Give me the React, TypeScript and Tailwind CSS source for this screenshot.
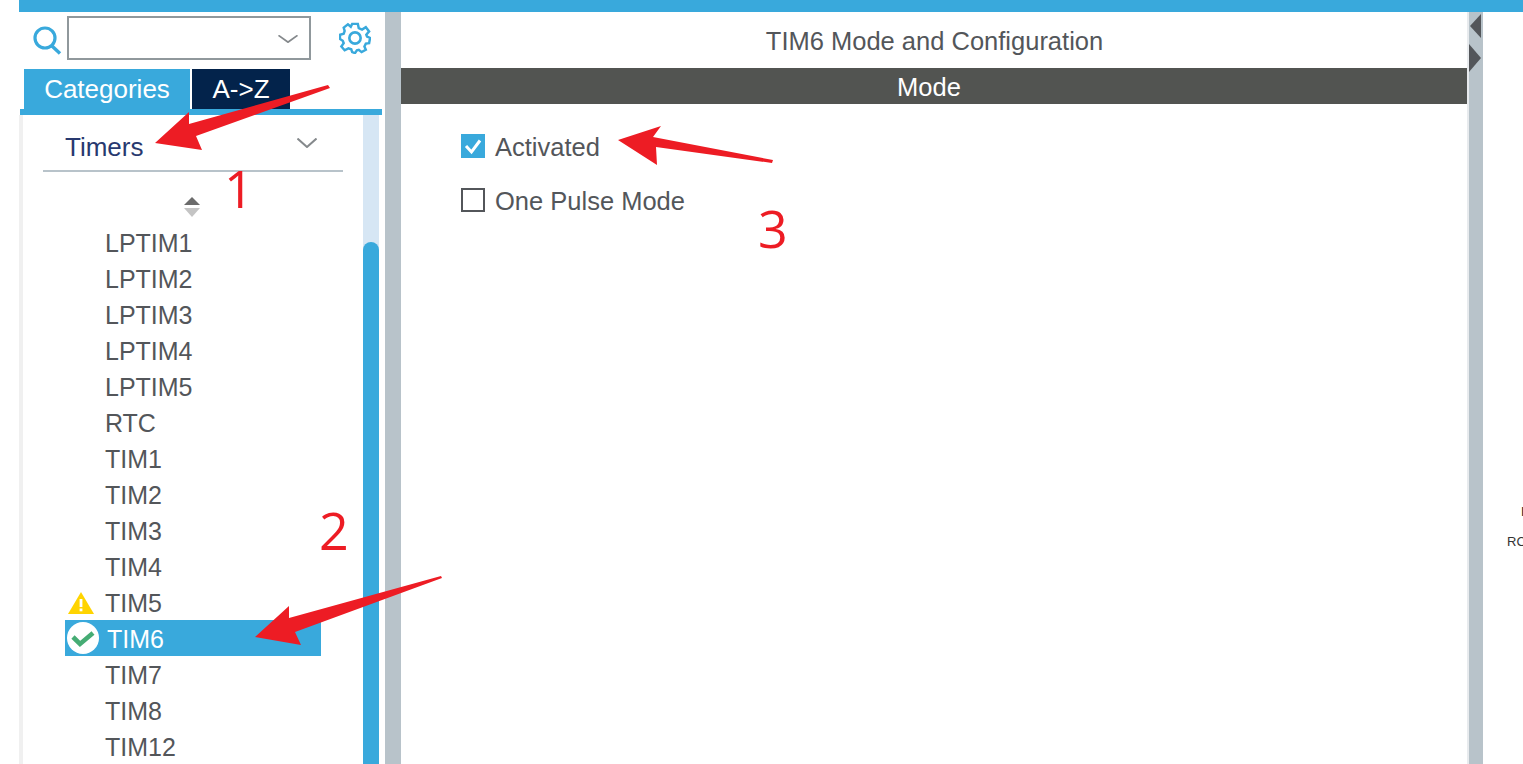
import React from "react";

const timers = ["LPTIM1", "LPTIM2", "LPTIM3", "LPTIM4", "LPTIM5", "RTC", "TIM1", "TIM2", "TIM3", "TIM4", "TIM5", "TIM6", "TIM7", "TIM8", "TIM12"];

const Chevron = ({ className }: { className: string }) => (
  <svg viewBox="0 0 20 10" preserveAspectRatio="none" className={className} fill="none" stroke="#85898c" strokeWidth="2">
    <path d="M0.5 0.5 L10 9 L19.5 0.5" />
  </svg>
);

const SearchIcon = () => (
  <svg viewBox="0 0 30 30" className="h-[30px] w-[30px] shrink-0" fill="none" stroke="#39a9dc">
    <circle cx="13" cy="13" r="10" strokeWidth="3.2" />
    <path d="M20 21 L28 28.5" strokeWidth="3.4" />
  </svg>
);

const GearIcon = () => (
  <svg viewBox="0 0 34 34" className="h-[32px] w-[32px]" fill="none" stroke="#39a9dc" strokeWidth="2.6">
    <path d="M14 2 H20 L21 6.5 L24.5 8 L28.5 5.5 L32 10 L29 13.5 L29.8 15.5 L33 17 L32 22.5 L28.5 23 L27 26 L28.5 29.5 L24 32 L21 29.5 L19 30 L17 33 L14 32 L13 29 L10 28 L6 30 L2.5 26 L5 22.5 L4 20 L1 18 V13.5 L5 12.5 L6 9.5 L5 6 L9.5 2.5 L12.5 5 Z" />
    <circle cx="17" cy="17" r="6" strokeWidth="2.8" />
  </svg>
);

const WarningIcon = () => (
  <svg viewBox="0 0 26 22" className="h-[22px] w-[26px]">
    <path d="M13 0 L26 22 H0 Z" fill="#ffd400" />
    <rect x="11.6" y="7" width="2.8" height="8" fill="#fff" />
    <rect x="11.6" y="16.5" width="2.8" height="2.8" fill="#fff" />
  </svg>
);

const OkIcon = () => (
  <svg viewBox="0 0 32 32" className="h-[32px] w-[32px]">
    <circle cx="16" cy="16" r="16" fill="#fff" />
    <path d="M6 15 L13 22 L26 11" fill="none" stroke="#45ac74" strokeWidth="4.6" />
  </svg>
);

const Sidebar = () => (
  <aside className="flex w-[366px] shrink-0 flex-col overflow-hidden">
    <div className="flex h-[57px] shrink-0 items-start pl-[13px] pt-[4px]">
      <div className="mt-[9px] mr-[5px]">
        <SearchIcon />
      </div>
      <div className="flex h-[44px] w-[244px] items-center justify-end border-2 border-[#90989c] pr-[11px]">
        <Chevron className="mt-[2px] h-[8px] w-[20px]" />
      </div>
      <div className="ml-[28px] mt-[6px]">
        <GearIcon />
      </div>
    </div>
    <div className="ml-[5px] flex h-[40px] shrink-0 items-start gap-[2px]">
      <div className="flex h-[40px] w-[166px] items-center justify-center bg-[#39a9dc] text-[26px] text-white">Categories</div>
      <div className="flex h-[40px] w-[98px] items-center justify-center bg-[#03234b] text-[26px] text-white">A-&gt;Z</div>
    </div>
    <div className="ml-[1px] mr-[3px] h-[6px] shrink-0 bg-[#39a9dc]" />
    <div className="flex min-h-0 flex-1">
      <div className="w-[4px] shrink-0 bg-[#f0f0f0]" />
      <div className="w-[340px] shrink-0">
        <div className="mx-[20px] flex h-[57px] items-center justify-between border-b-2 border-[#b8c3ca] pl-[22px] pr-[26px] pt-[9px]">
          <span className="text-[26px] text-[#28396f]">Timers</span>
          <Chevron className="mb-[8px] h-[10px] w-[20px]" />
        </div>
        <div className="flex h-[52px] items-center pl-[161px] pt-[17px]">
          <div className="flex flex-col items-center gap-[3px]">
            <div className="h-0 w-0 border-x-[8px] border-b-[8px] border-x-transparent border-b-[#6b6b6b]" />
            <div className="h-0 w-0 border-x-[8px] border-t-[9px] border-x-transparent border-t-[#c4c4c4]" />
          </div>
        </div>
        <ul className="ml-[42px] w-[256px]">
          {timers.map((name) => {
            const selected = name === "TIM6";
            return (
              <li
                key={name}
                className={selected ? "flex h-[36px] items-center bg-[#39a9dc] text-[25px] text-white" : "flex h-[36px] items-center text-[25px] text-[#53565a]"}
              >
                <span className="flex w-[43px] shrink-0 items-center justify-center">
                  {name === "TIM5" && <span className="mr-[11px] flex pt-[2px]"><WarningIcon /></span>}
                  {selected && <span className="mr-[7px] flex"><OkIcon /></span>}
                </span>
                <span className={selected ? "-ml-[1px] pt-[3px]" : "-ml-[3px] pt-[4px]"}>{name}</span>
              </li>
            );
          })}
        </ul>
      </div>
      <div className="w-[16px] shrink-0 bg-[#d6e6f4] pt-[127px]">
        <div className="h-full rounded-t-[8px] bg-[#39a9dc]" />
      </div>
      <div className="w-[6px] shrink-0 bg-white" />
    </div>
  </aside>
);

const Main = () => (
  <main className="flex min-w-0 flex-1 flex-col">
    <div className="flex h-[56px] shrink-0 items-center justify-center pl-[1px] pt-[2px] text-[25.5px] text-[#53565a]">TIM6 Mode and Configuration</div>
    <div className="flex h-[36px] shrink-0 items-center justify-center bg-[#525451] pr-[10px] pt-[2px] text-[25.5px] text-white">Mode</div>
    <div className="flex flex-col gap-[30px] pl-[60px] pt-[30px] text-[25.5px] text-[#53565a]">
      <label className="flex h-[24px] items-center gap-[10px]">
        <span className="flex h-[24px] w-[24px] items-center justify-center bg-[#39a9dc]">
          <svg viewBox="0 0 24 24" className="h-[24px] w-[24px]" fill="none" stroke="#fff" strokeWidth="3">
            <path d="M5 12 L10.5 18 L19 6.5" />
          </svg>
        </span>
        <span className="pt-[2px]">Activated</span>
      </label>
      <label className="flex h-[24px] items-center gap-[10px]">
        <span className="h-[24px] w-[24px] border-2 border-[#53565a]" />
        <span className="pt-[2px]">One Pulse Mode</span>
      </label>
    </div>
  </main>
);

const Annotations = () => (
  <>
    <svg viewBox="0 0 1523 764" className="pointer-events-none absolute inset-0 h-[764px] w-[1523px]" fill="#ed1c24">
      <path d="M328 85 L330 88 L196 136 L202 150 L155 143 L189 112 L189 124 Z" />
      <path d="M441 576 L442 578 L295 632 L301 645 L255 637 L289 606 L289 618 Z" />
      <path d="M773 160 L772 163 L656 147 L657 165 L618 140 L661 126 L653 137 Z" />
    </svg>
    <span className="absolute left-[224px] top-[158px] font-['Open_Sans',sans-serif] text-[52px] leading-[60px] text-[#ed1c24]">1</span>
    <span className="absolute left-[319px] top-[500px] font-['Open_Sans',sans-serif] text-[52px] leading-[60px] text-[#ed1c24]">2</span>
    <span className="absolute left-[758px] top-[198px] font-['Open_Sans',sans-serif] text-[52px] leading-[60px] text-[#ed1c24]">3</span>
  </>
);

export default function App() {
  return (
    <div className="relative h-[764px] w-[1523px] overflow-hidden bg-white font-['Liberation_Sans',Arial,sans-serif]">
      <div className="ml-[19px] h-[12px] bg-[#39a9dc]" />
      <div className="ml-[19px] flex h-[752px]">
        <Sidebar />
        <div className="w-[16px] shrink-0 bg-[#b8c3ca]" />
        <Main />
        <div className="w-[2px] shrink-0 bg-[#e8ebee]" />
        <div className="flex w-[14px] shrink-0 flex-col items-start gap-[6px] bg-[#b8c3ca] pt-[2px]">
          <div className="ml-[1px] h-0 w-0 border-y-[12px] border-r-[11px] border-y-transparent border-r-[#53565a]" />
          <div className="h-0 w-0 border-y-[14px] border-l-[12px] border-y-transparent border-l-[#53565a]" />
        </div>
        <div className="relative w-[40px] shrink-0">
          <span className="absolute left-[38px] top-[493px] text-[12px] leading-[14px] text-[#222]">I</span>
          <span className="absolute left-[24px] top-[523px] text-[13px] leading-[14px] text-[#333]">RC</span>
        </div>
      </div>
      <Annotations />
    </div>
  );
}
